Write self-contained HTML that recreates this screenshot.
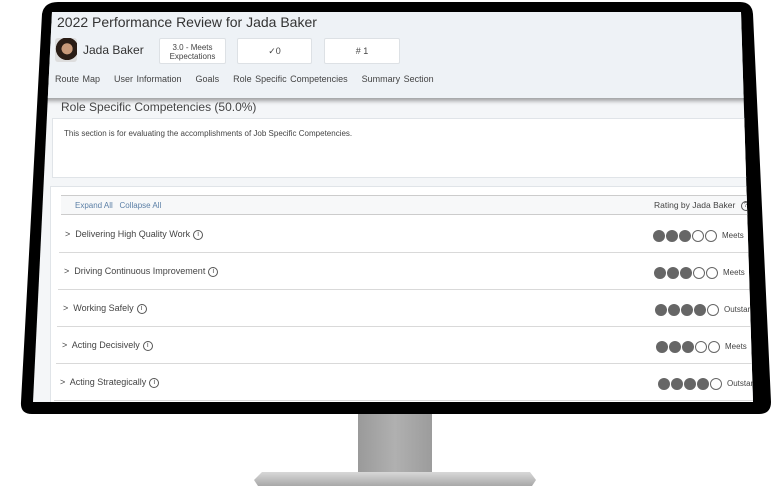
<!DOCTYPE html>
<html><head><meta charset="utf-8"><style>
*{margin:0;padding:0;box-sizing:border-box}
body{width:780px;height:488px;background:#fff;position:relative;overflow:hidden;font-family:"Liberation Sans",sans-serif;color:#333}
.abs{position:absolute;white-space:nowrap}
#screen{position:absolute;left:0;top:0;width:780px;height:488px;clip-path:polygon(52px 12px,741px 12px,753px 402px,33px 402px);background:#f4f6f8}
.dot{display:inline-block;width:12px;height:12px;border-radius:50%;background:#666;margin-right:1px;vertical-align:middle}
.o{background:#fff;border:1.5px solid #666}
.row{font-size:9px;color:#444}
.info{display:inline-block;width:10px;height:10px;border:1px solid #555;border-radius:50%;font-size:7px;text-align:center;line-height:8px;margin-left:3px;vertical-align:middle}
.sep{position:absolute;height:1px;background:#d9d9d9}
.rt{font-size:8px;color:#444;margin-left:4px;vertical-align:middle}
.box{position:absolute;background:#fff;border:1px solid #dde1e5;border-radius:2px;font-size:9px;color:#444;text-align:center}
</style></head><body>
<svg class="abs" style="left:0;top:0" width="780" height="488">
<defs><linearGradient id="n" x1="0" x2="1"><stop offset="0" stop-color="#9a9a9a"/><stop offset=".5" stop-color="#b0b0b0"/><stop offset="1" stop-color="#9c9c9c"/></linearGradient>
<linearGradient id="b" x1="0" y1="0" x2="0" y2="1"><stop offset="0" stop-color="#d8d8d8"/><stop offset="1" stop-color="#a8a8a8"/></linearGradient></defs>
<rect x="358" y="412" width="74" height="64" fill="url(#n)"/>
<path d="M262 472 L530 472 L536 480 L532 486 L258 486 L254 480 Z" fill="url(#b)"/>
<path d="M58 2 L740 2 Q752 2 753 14 L771 402 Q771 414 759 414 L32 414 Q20 414 21 402 L42 14 Q44 2 58 2 Z" fill="#000"/>
</svg>
<div id="screen">
  <div class="abs" style="left:40px;top:12px;width:720px;height:86px;background:#eef2f6;box-shadow:0 3px 4px rgba(0,0,0,.35)"></div>
  <div class="abs" style="left:57px;top:14px;font-size:14px;color:#333">2022 Performance Review for Jada Baker</div>
  <div class="abs" style="left:55px;top:38px;width:22px;height:24px;border-radius:3px;background:radial-gradient(circle at 55% 45%,#c89a7a 0 30%,#2a1d16 32% 62%,#ddd 64%)"></div>
  <div class="abs" style="left:83px;top:43px;font-size:12px">Jada Baker</div>
  <div class="box" style="left:159px;top:38px;width:67px;height:26px;font-size:8px;line-height:9px;padding-top:4px">3.0 - Meets<br>Expectations</div>
  <div class="box" style="left:237px;top:38px;width:75px;height:26px;line-height:25px">✓0</div>
  <div class="box" style="left:324px;top:38px;width:76px;height:26px;line-height:25px">#&nbsp;1</div>
  <div class="abs" style="left:55px;top:74px;font-size:9px;color:#444;word-spacing:1px">Route Map &nbsp;&nbsp; User Information &nbsp;&nbsp; Goals &nbsp;&nbsp; Role Specific Competencies &nbsp;&nbsp; Summary Section</div>
  <div class="abs" style="left:61px;top:100px;font-size:12px;color:#444">Role Specific Competencies (50.0%)</div>
  <div class="abs" style="left:52px;top:118px;width:710px;height:60px;background:#fff;border:1px solid #e0e4e8"></div>
  <div class="abs" style="left:64px;top:129px;font-size:8px;color:#444">This section is for evaluating the accomplishments of Job Specific Competencies.</div>
  <div class="abs" style="left:50px;top:186px;width:712px;height:230px;background:#fff;border:1px solid #e0e4e8"></div>
  <div class="abs" style="left:61px;top:195px;width:700px;height:20px;background:#f7f8f9;border-top:1.5px solid #ccc;border-bottom:1px solid #ccc"></div>
  <div class="abs" style="left:75px;top:201px;font-size:8px;color:#5b7fa6">Expand All &nbsp;&nbsp;Collapse All</div>
  <div class="abs" style="left:654px;top:200px;font-size:8.5px;color:#444">Rating by Jada Baker <span class="info">?</span></div>

  <div class="abs row" style="left:65px;top:229px">&gt;&nbsp; Delivering High Quality Work<span class="info">i</span></div>
  <div class="abs" style="left:653px;top:227px"><span class="dot"></span><span class="dot"></span><span class="dot"></span><span class="dot o"></span><span class="dot o"></span><span class="rt">Meets</span></div>
  <div class="sep" style="left:59px;top:252px;width:700px"></div>
  <div class="abs row" style="left:64px;top:266px">&gt;&nbsp; Driving Continuous Improvement<span class="info">i</span></div>
  <div class="abs" style="left:654px;top:264px"><span class="dot"></span><span class="dot"></span><span class="dot"></span><span class="dot o"></span><span class="dot o"></span><span class="rt">Meets</span></div>
  <div class="sep" style="left:58px;top:289px;width:702px"></div>
  <div class="abs row" style="left:63px;top:303px">&gt;&nbsp; Working Safely<span class="info">i</span></div>
  <div class="abs" style="left:655px;top:301px"><span class="dot"></span><span class="dot"></span><span class="dot"></span><span class="dot"></span><span class="dot o"></span><span class="rt">Outstanding</span></div>
  <div class="sep" style="left:57px;top:326px;width:704px"></div>
  <div class="abs row" style="left:62px;top:340px">&gt;&nbsp; Acting Decisively<span class="info">i</span></div>
  <div class="abs" style="left:656px;top:338px"><span class="dot"></span><span class="dot"></span><span class="dot"></span><span class="dot o"></span><span class="dot o"></span><span class="rt">Meets</span></div>
  <div class="sep" style="left:56px;top:363px;width:706px"></div>
  <div class="abs row" style="left:60px;top:377px">&gt;&nbsp; Acting Strategically<span class="info">i</span></div>
  <div class="abs" style="left:658px;top:375px"><span class="dot"></span><span class="dot"></span><span class="dot"></span><span class="dot"></span><span class="dot o"></span><span class="rt">Outstanding</span></div>
  <div class="sep" style="left:54px;top:400px;width:710px"></div>
</div>
</body></html>
